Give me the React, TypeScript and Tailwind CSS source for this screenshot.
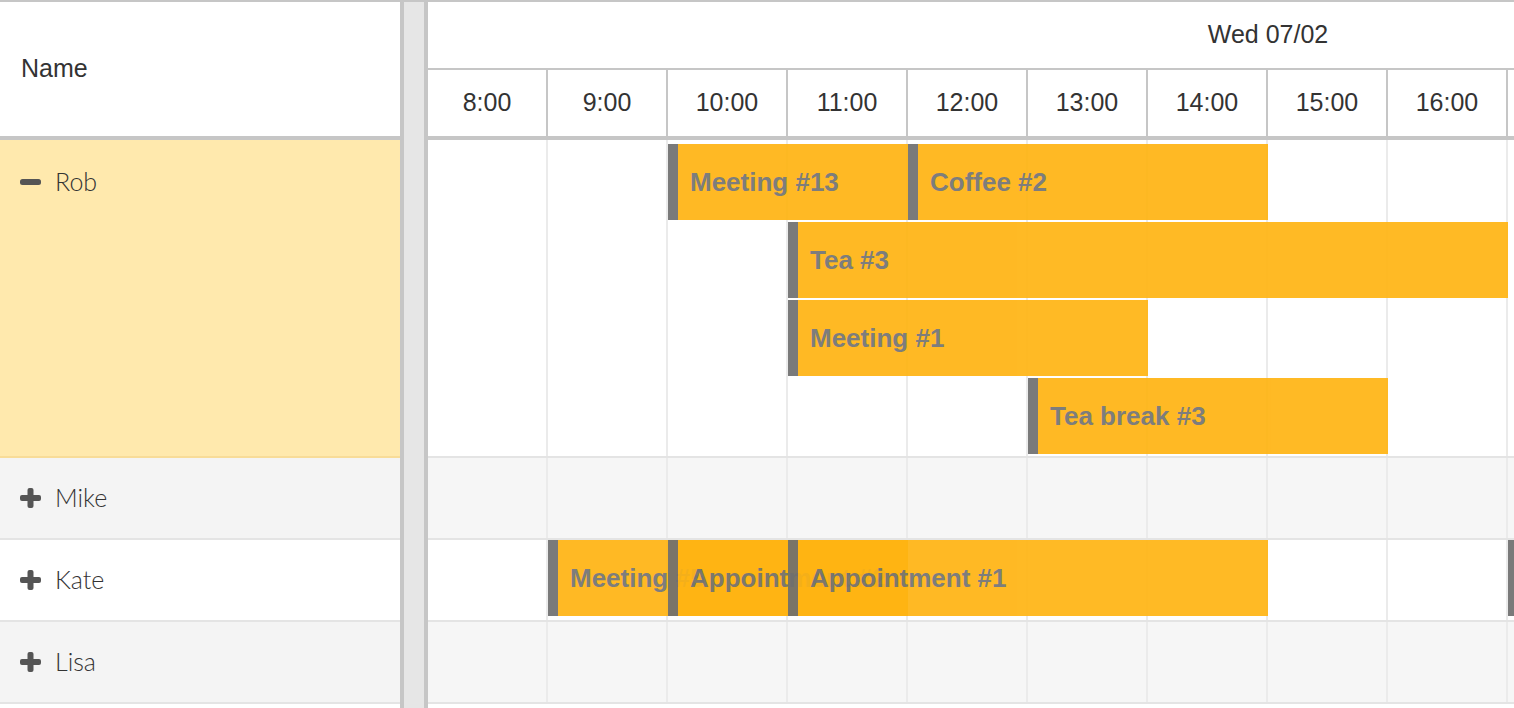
import React from "react";

interface Ev {
  title: string;
  start: number;
  end: number;
  lane: number;
}

const HOURS = [8, 9, 10, 11, 12, 13, 14, 15, 16, 17, 18, 19, 20, 21];
const COL = 120;
const FONT = "font-['Liberation_Sans','Helvetica_Neue',Arial,sans-serif]";

const robEvents: Ev[] = [
  { title: "Meeting #13", start: 10, end: 12, lane: 0 },
  { title: "Coffee #2", start: 12, end: 15, lane: 0 },
  { title: "Tea #3", start: 11, end: 17, lane: 1 },
  { title: "Meeting #1", start: 11, end: 14, lane: 2 },
  { title: "Tea break #3", start: 13, end: 16, lane: 3 },
];

const kateEvents: Ev[] = [
  { title: "Meeting #5", start: 9, end: 12, lane: 0 },
  { title: "Appointment #2", start: 10, end: 12, lane: 0 },
  { title: "Appointment #1", start: 11, end: 15, lane: 0 },
  { title: "Coffee #7", start: 17, end: 19, lane: 0 },
];

function Minus() {
  return (
    <svg width="21" height="20" viewBox="0 0 21 20">
      <rect x="0" y="7" width="21" height="6" rx="2.5" fill="#555" />
    </svg>
  );
}

function Plus() {
  return (
    <svg width="21" height="20" viewBox="0 0 21 20">
      <rect x="0" y="7" width="21" height="6" rx="2" fill="#555" />
      <rect x="7.5" y="0" width="6" height="20" rx="2" fill="#555" />
    </svg>
  );
}

function GridCells() {
  return (
    <div className="flex h-full">
      {HOURS.map((h) => (
        <div key={h} className="w-[120px] shrink-0 h-full border-r-2 border-[#ebebeb]" />
      ))}
    </div>
  );
}

function Event({ ev, top }: { ev: Ev; top: number }) {
  return (
    <div
      className="absolute h-[76px] flex items-center bg-[#ffb412] opacity-[0.92]"
      style={{ left: (ev.start - 8) * COL, width: (ev.end - ev.start) * COL, top }}
    >
      <div className="w-[10px] h-full bg-[#6f6f6f] shrink-0" />
      <span className="pl-[12px] text-[26px] font-bold text-[#737373] whitespace-nowrap">{ev.title}</span>
    </div>
  );
}

function NameLabel({ name }: { name: string }) {
  return (
    <span className="text-[25px] font-light text-[#333] font-['Lato','Liberation_Sans',sans-serif]">{name}</span>
  );
}

function NameRow({ name, bg }: { name: string; bg: string }) {
  return (
    <div className={`flex items-center gap-[14px] pl-[20px] h-[82px] border-b-2 border-[#e4e4e4] ${bg}`}>
      <Plus />
      <NameLabel name={name} />
    </div>
  );
}

export default function App() {
  return (
    <div className={`flex h-[708px] w-full overflow-hidden bg-white border-t-2 border-[#c6c6c6] ${FONT}`}>
      {/* names column */}
      <div className="w-[400px] shrink-0 flex flex-col">
        <div className="h-[138px] border-b-4 border-[#c6c6c6] flex items-center pl-[21px]">
          <span className="text-[25px] text-[#333]">Name</span>
        </div>
        <div className="h-[318px] bg-[#ffe9ad] border-b-2 border-[#f8dc98] pt-[4px]">
          <div className="flex items-center gap-[14px] pl-[20px] h-[76px]">
            <Minus />
            <NameLabel name="Rob" />
          </div>
        </div>
        <NameRow name="Mike" bg="bg-[#f4f4f4]" />
        <NameRow name="Kate" bg="bg-white" />
        <NameRow name="Lisa" bg="bg-[#f4f4f4]" />
      </div>

      {/* splitter */}
      <div className="w-[28px] shrink-0 bg-[#e6e6e6] border-x-4 border-[#c6c6c6]" />

      {/* timeline */}
      <div className="flex-1 overflow-hidden">
        <div className="w-[1680px]">
          <div className="h-[68px] border-b-2 border-[#c6c6c6] flex items-center justify-center">
            <span className="text-[25px] text-[#333]">Wed 07/02</span>
          </div>
          <div className="h-[70px] border-b-4 border-[#c6c6c6] flex">
            {HOURS.map((h) => (
              <div
                key={h}
                className="w-[120px] shrink-0 h-full border-r-2 border-[#c6c6c6] flex items-center justify-center text-[25px] text-[#333]"
              >
                {h}:00
              </div>
            ))}
          </div>

          <div className="relative h-[318px] border-b-2 border-[#e4e4e4] bg-white">
            <GridCells />
            {robEvents.map((ev) => (
              <Event key={ev.title} ev={ev} top={4 + ev.lane * 78} />
            ))}
          </div>
          <div className="relative h-[82px] border-b-2 border-[#e4e4e4] bg-[#f6f6f6]">
            <GridCells />
          </div>
          <div className="relative h-[82px] border-b-2 border-[#e4e4e4] bg-white">
            <GridCells />
            {kateEvents.map((ev) => (
              <Event key={ev.title} ev={ev} top={0} />
            ))}
          </div>
          <div className="relative h-[82px] border-b-2 border-[#e4e4e4] bg-[#f6f6f6]">
            <GridCells />
          </div>
        </div>
      </div>
    </div>
  );
}
